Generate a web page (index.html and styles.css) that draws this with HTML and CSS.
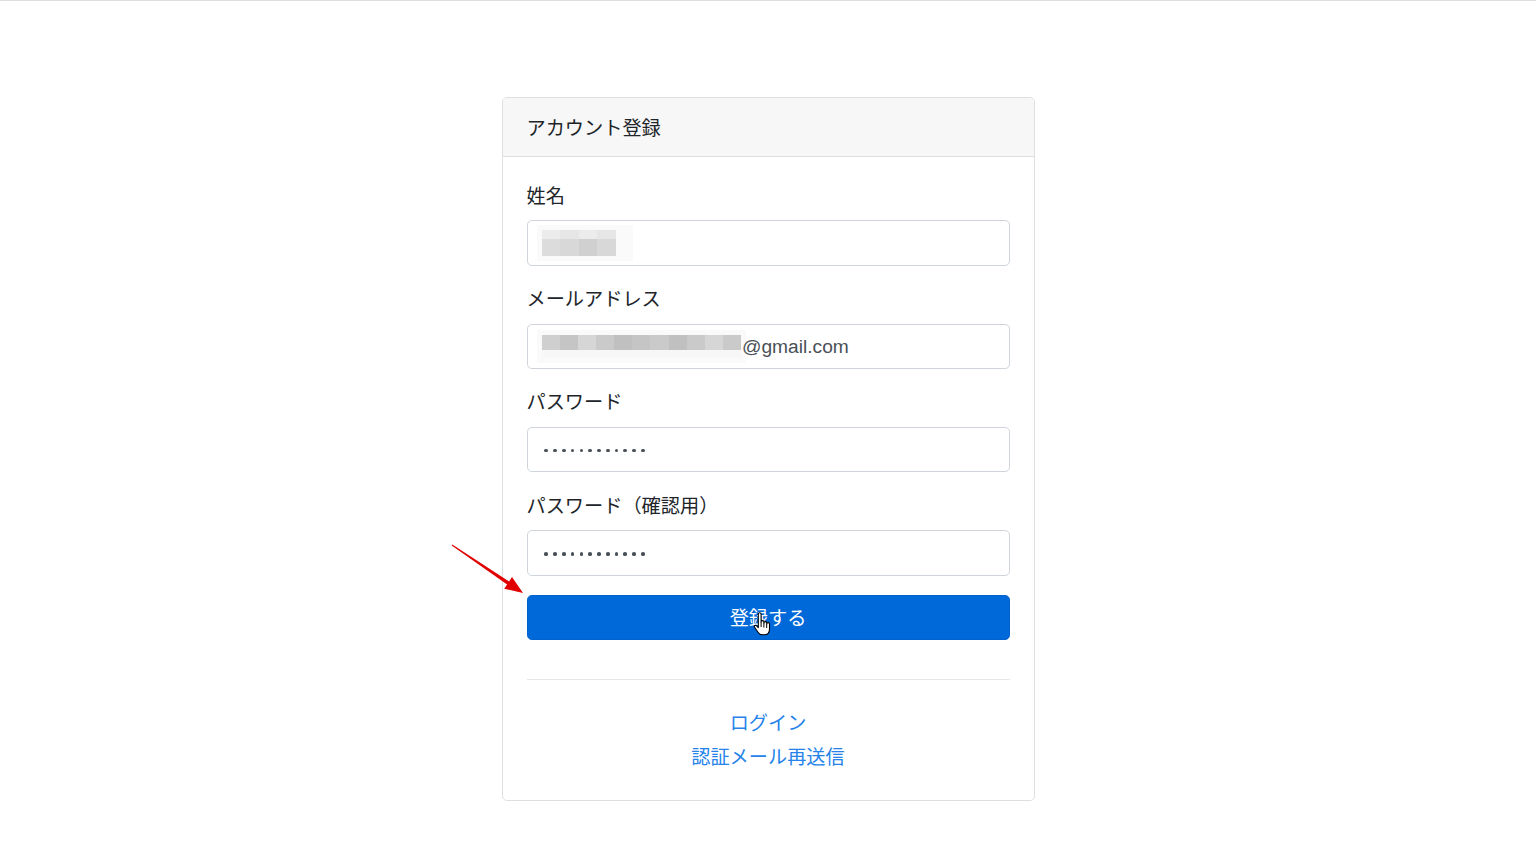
FILE: index.html
```html
<!DOCTYPE html>
<html lang="ja">
<head>
<meta charset="utf-8">
<title>アカウント登録</title>
<link rel="stylesheet" href="styles.css">
</head>
<body>
<div class="page">
  <div class="card">
    <div class="card-header">アカウント登録</div>
    <div class="card-body">
      <div class="form-group">
        <label class="label">姓名</label>
        <div class="input">
          <div class="blur blur-name">
            <span class="a1"></span><span class="a2"></span><span class="a1"></span><span class="a2"></span><span class="edge"></span>
            <span class="b1"></span><span class="b2"></span><span class="b3"></span><span class="b2"></span><span class="edge"></span>
          </div>
        </div>
      </div>
      <div class="form-group">
        <label class="label">メールアドレス</label>
        <div class="input">
          <div class="blur blur-mail">
            <span class="s2"></span><span class="s4"></span><span class="s1"></span><span class="s3"></span><span class="s5"></span><span class="s4"></span><span class="s3"></span><span class="s5"></span><span class="s3"></span><span class="s1"></span><span class="s3"></span>
            <span class="l"></span><span class="l"></span><span class="l"></span><span class="l"></span><span class="l"></span><span class="l"></span><span class="l"></span><span class="l"></span><span class="l"></span><span class="l"></span><span class="l"></span>
          </div>
          <span class="value">@gmail.com</span>
        </div>
      </div>
      <div class="form-group">
        <label class="label">パスワード</label>
        <div class="input">
          <div class="dots"><i></i><i></i><i></i><i></i><i></i><i></i><i></i><i></i><i></i><i></i><i></i><i></i></div>
        </div>
      </div>
      <div class="form-group">
        <label class="label">パスワード（確認用）</label>
        <div class="input">
          <div class="dots"><i></i><i></i><i></i><i></i><i></i><i></i><i></i><i></i><i></i><i></i><i></i><i></i></div>
        </div>
      </div>
      <div class="form-group">
        <button class="btn" type="button">登録する
          <svg class="cursor" width="18" height="24" viewBox="0 0 18 24">
            <path d="M5.3 2.2a1.4 1.4 0 0 1 2.8 0V10a1.4 1.4 0 0 1 2.8 0v1a1.4 1.4 0 0 1 2.8 0v1a1.4 1.4 0 0 1 2.8 0v5.2c0 3.4-2.2 5.6-5.3 5.6H9.3c-2 0-3.3-1-4.3-2.6L1.6 15.2c-0.8-1.2 0.7-2.5 1.8-1.5L5.3 15.6Z" fill="#fff" stroke="#000" stroke-width="1.1" stroke-linejoin="round"/>
            <path d="M8.1 10v5M10.9 11v4.5M13.7 12v4" stroke="#000" stroke-width="1" fill="none"/>
          </svg>
        </button>
      </div>
      <hr class="divider">
      <div class="links">
        <div class="link-row"><a href="#" class="link">ログイン</a></div>
        <div class="link-row"><a href="#" class="link">認証メール再送信</a></div>
      </div>
    </div>
    <svg class="arrow" width="80" height="60" viewBox="0 0 80 60">
      <polygon points="5.7,6.5 6.3,5.5 63.1,42.4 66.0,38.1 77,54 58.2,49.7 61.1,45.4" fill="#e10000"/>
    </svg>
  </div>
</div>
</body>
</html>
```
FILE: styles.css
```css
html, body {
  margin: 0;
  padding: 0;
  background: #fff;
}
body {
  font-family: "Liberation Sans", "Noto Sans CJK JP", sans-serif;
  font-size: 19.2px;
  line-height: 28.8px;
  color: #212529;
}
.page {
  border-top: 1px solid #dcdce1;
  padding-top: 96px;
  display: flex;
  justify-content: center;
}
.card {
  position: relative;
  width: 533px;
  box-sizing: border-box;
  border: 1px solid #dfdfdf;
  border-radius: 4.8px;
  background: #fff;
}
.card-header {
  background: #f7f7f7;
  border-bottom: 1px solid #dfdfdf;
  padding: 16.5px 24px 0;
  height: 59px;
  box-sizing: border-box;
  line-height: 28.8px;
  border-radius: 4px 4px 0 0;
}
.card-body {
  padding: 25px 24px 24px;
}
.form-group {
  margin-bottom: 19.2px;
}
.label {
  display: block;
  margin-bottom: 9.6px;
  line-height: 28.8px;
  padding-top: 1px;
  height: 28.8px;
  box-sizing: border-box;
}
.input {
  height: 45.6px;
  box-sizing: border-box;
  border: 1px solid #ced4da;
  border-radius: 4.8px;
  padding: 0 14.4px;
  display: flex;
  align-items: center;
  color: #495057;
}
.blur {
  display: grid;
  box-shadow: 0 0 0 5px #fafafa;
  background: #fafafa;
}
.blur-name {
  grid-template-columns: repeat(4, 18.5px) 12px;
  grid-template-rows: 9px 17px;
  margin-top: -1px;
}
.blur-name .a1 { background: #ececec; }
.blur-name .a2 { background: #e6e6e6; }
.blur-name .b1 { background: #dcdcdc; }
.blur-name .b2 { background: #d8d8d8; }
.blur-name .b3 { background: #d0d0d0; }
.blur-name .edge { background: #fafafa; }
.blur-mail {
  grid-template-columns: repeat(11, 18.1px);
  grid-template-rows: 15px 8px;
  margin-top: 1px;
}
.blur-mail .s1 { background: #d6d6d6; }
.blur-mail .s2 { background: #cfcfcf; }
.blur-mail .s3 { background: #cacaca; }
.blur-mail .s4 { background: #c5c5c5; }
.blur-mail .s5 { background: #c0c0c0; }
.blur-mail .l { background: #f7f7f7; }
.value {
  margin-left: 1px;
  margin-top: 2px;
  line-height: 28.8px;
}
.dots {
  display: flex;
  gap: 5.1px;
  margin-left: 2.5px;
  margin-top: 2px;
}
.dots i {
  width: 3.7px;
  height: 3.7px;
  border-radius: 50%;
  background: #495057;
}
.btn {
  position: relative;
  display: block;
  width: 100%;
  height: 45.6px;
  border: 1px solid #0062cc;
  border-radius: 4.8px;
  background: #0069d9;
  color: #fff;
  font-family: "Liberation Sans", "Noto Sans CJK JP", sans-serif;
  font-size: 19.2px;
  line-height: 28.8px;
  padding: 3px 0 0;
  cursor: pointer;
}
.cursor {
  position: absolute;
  left: 225px;
  top: 16px;
}
.divider {
  margin: 38.4px 0 19.2px;
  border: 0;
  border-top: 1px solid #e6e6e6;
  height: 0;
}
.links {
  padding-top: 11.6px;
  text-align: center;
}
.link-row {
  margin-bottom: 4.8px;
  line-height: 28.8px;
}
.link-row:last-child {
  margin-bottom: 2.8px;
}
.link {
  color: #2583ea;
  text-decoration: none;
}
.arrow {
  position: absolute;
  left: -57px;
  top: 441px;
}
```
